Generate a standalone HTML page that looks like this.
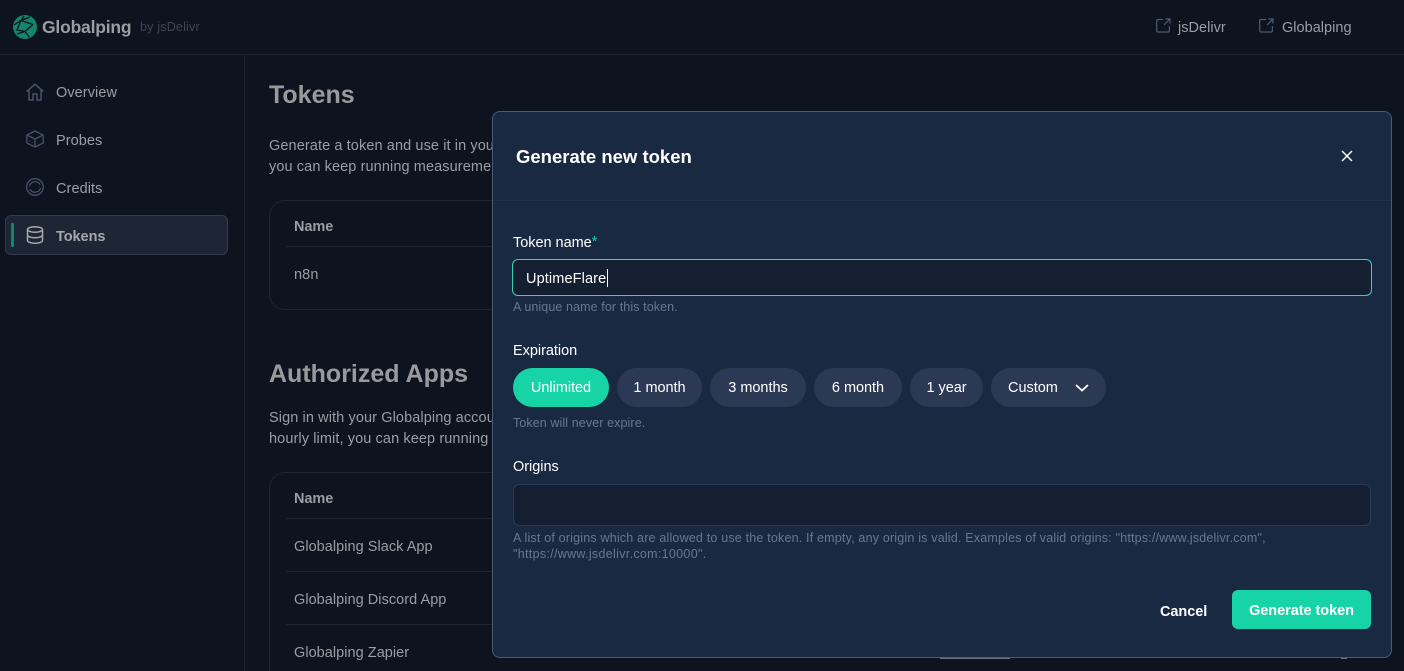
<!DOCTYPE html>
<html><head><meta charset="utf-8"><style>
html,body{margin:0;padding:0;width:1404px;height:671px;overflow:hidden;background:#0d131f;font-family:"Liberation Sans",sans-serif}
#r{position:relative;width:1404px;height:671px;overflow:hidden;background:#0d131f}
.t{position:absolute;white-space:nowrap;line-height:20px;font-size:14.5px}
.b{position:absolute;box-sizing:border-box}
.g{color:#9a9ea4}
.h{font-size:25px;font-weight:700;color:#9a9a9c;line-height:30px;letter-spacing:0}
.w{color:#fff}
.s{font-size:12.5px;color:#6a778c;line-height:16px;letter-spacing:.1px}
.n{font-size:14.5px;font-weight:700;letter-spacing:-.05px}
.p{position:absolute;top:368px;height:39px;border-radius:20px;background:#2b3954;color:#fff;font-size:14.5px;line-height:41px;text-align:center;letter-spacing:-.03px}
svg{position:absolute;overflow:visible}
</style></head><body><div id="r">
<div class="b" style="left:0;top:54px;width:1404px;height:1px;background:#1a2331"></div>
<div class="b" style="left:244px;top:55px;width:1px;height:616px;background:#1a2331"></div>

<svg style="left:13px;top:15px" width="24" height="24" viewBox="0 0 24 24"><circle cx="12" cy="12" r="12" fill="#12866b"/><path d="M1 10 8 5.500l9-3.500M8 5.500 4 15l8 1.500 8-7M8 5.500l12 4M12 16.500l4.500 6M12 16.500 4 19M8 5.500 11 1" fill="none" stroke="#0d131f" stroke-width="1.300"/></svg>
<div class="t" style="left:42px;top:17px;font-size:17.5px;font-weight:700;color:#9a9ea2;letter-spacing:-.2px">Globalping</div>
<div class="t" style="left:140px;top:17px;font-size:12.5px;color:#3d4655;letter-spacing:.2px">by jsDelivr</div>

<svg style="left:1156px;top:18px" width="15" height="15" viewBox="0 0 15 15" fill="none" stroke="#4c5c70" stroke-width="1.200"><path d="M7 1.500H2A1.500 1.500 0 0 0 .7 3v9.500A1.500 1.500 0 0 0 2 14h10a1.500 1.500 0 0 0 1.400-1.500V8M9.500 1H14v4.500M14 1 8 7"/></svg>
<div class="t g" style="left:1178px;top:18px;letter-spacing:.02px">jsDelivr</div>
<svg style="left:1259px;top:18px" width="15" height="15" viewBox="0 0 15 15" fill="none" stroke="#4c5c70" stroke-width="1.200"><path d="M7 1.500H2A1.500 1.500 0 0 0 .7 3v9.500A1.500 1.500 0 0 0 2 14h10a1.500 1.500 0 0 0 1.400-1.500V8M9.500 1H14v4.500M14 1 8 7"/></svg>
<div class="t g" style="left:1282px;top:18px;letter-spacing:.02px">Globalping</div>

<svg style="left:26px;top:83px" width="18" height="18" viewBox="0 0 18 18" fill="none" stroke="#465268" stroke-width="1.500"><path d="M.7 8.500 9 1.200l8.300 7.300M3 6.800V17h4v-6h4v6h4V6.800"/></svg>
<div class="t g" style="left:56px;top:83px;letter-spacing:.07px">Overview</div>
<svg style="left:26px;top:130px" width="18" height="18" viewBox="0 0 18 18" fill="none" stroke="#465268" stroke-width="1.300"><path d="M9 1 .8 5v8L9 17l8.200-4V5zM.8 5 9 9l8.200-4M9 9v8M3.500 10.500v.8M6 11.800v.8"/></svg>
<div class="t g" style="left:56px;top:131px;letter-spacing:.07px">Probes</div>
<svg style="left:26px;top:178px" width="18" height="18" viewBox="0 0 18 18" fill="none" stroke="#465268" stroke-width="1.300"><circle cx="9" cy="9" r="8.300"/><path d="M14 6.500A5.800 5.800 0 0 0 3.500 8M4 11.500A5.800 5.800 0 0 0 14.500 10"/></svg>
<div class="t g" style="left:56px;top:179px;letter-spacing:.07px">Credits</div>
<div class="b" style="left:5px;top:215px;width:223px;height:40px;background:#1e2635;border:1px solid #323b4b;border-radius:6px"></div>
<div class="b" style="left:11px;top:223px;width:3px;height:24px;background:#12866b;border-radius:1px"></div>
<svg style="left:26px;top:226px" width="18" height="18" viewBox="0 0 18 18" fill="none" stroke="#a5a9ae" stroke-width="1.500"><ellipse cx="9" cy="3.500" rx="7.500" ry="2.800"/><path d="M1.500 3.500v11c0 1.500 3.300 2.800 7.500 2.800s7.500-1.300 7.500-2.800v-11M1.500 9c0 1.500 3.300 2.800 7.500 2.800s7.500-1.300 7.500-2.800"/></svg>
<div class="t n" style="left:56px;top:227px;color:#a5a9ae">Tokens</div>

<div class="t h" style="left:269px;top:80px">Tokens</div>
<div class="t g" style="left:269px;top:136px;letter-spacing:.1px">Generate a token and use it in your</div>
<div class="t g" style="left:269px;top:157px;letter-spacing:.1px">you can keep running measurements</div>
<div class="b" style="left:269px;top:200px;width:1111px;height:110px;border:1px solid #1c2533;border-radius:16px"></div>
<div class="t n" style="left:294px;top:217px;color:#9a9ea4">Name</div>
<div class="b" style="left:286px;top:246px;width:1077px;height:1px;background:#1c2533"></div>
<div class="t g" style="left:294px;top:265px;letter-spacing:.1px">n8n</div>

<div class="t h" style="left:269px;top:359px">Authorized Apps</div>
<div class="t g" style="left:269px;top:408px;letter-spacing:.1px">Sign in with your Globalping account</div>
<div class="t g" style="left:269px;top:429px;letter-spacing:.1px">hourly limit, you can keep running</div>
<div class="b" style="left:269px;top:472px;width:1111px;height:230px;border:1px solid #1c2533;border-right:none;border-radius:16px 0 0 16px"></div>
<div class="t n" style="left:294px;top:489px;color:#9a9ea4">Name</div>
<div class="b" style="left:286px;top:518px;width:1077px;height:1px;background:#1c2533"></div>
<div class="t g" style="left:294px;top:537px;letter-spacing:.04px">Globalping Slack App</div>
<div class="b" style="left:286px;top:571px;width:1077px;height:1px;background:#1c2533"></div>
<div class="t g" style="left:294px;top:590px;letter-spacing:.04px">Globalping Discord App</div>
<div class="b" style="left:286px;top:624px;width:1077px;height:1px;background:#1c2533"></div>
<div class="t g" style="left:294px;top:643px;letter-spacing:.04px">Globalping Zapier</div>
<div class="b" style="left:940px;top:658px;width:70px;height:1px;background:#6d7278"></div>
<div class="b" style="left:1341px;top:658px;width:6px;height:1px;background:#6d7278"></div>

<div class="b" style="left:492px;top:111px;width:900px;height:547px;background:#1a2942;border:1px solid #4a5b75;border-radius:8px"></div>
<div class="b" style="left:493px;top:200px;width:898px;height:1px;background:#22324c"></div>
<div class="t w" style="left:516px;top:147px;font-size:18.5px;font-weight:700;letter-spacing:0">Generate new token</div>
<svg style="left:1341px;top:150px" width="12" height="12" viewBox="0 0 12 12" fill="none" stroke="#fff" stroke-width="1.500"><path d="M1 1l10 10M11 1 1 11"/></svg>

<div class="t w" style="left:513px;top:233px;letter-spacing:-.03px">Token name<span style="color:#17d4a7;position:relative;top:-1px">*</span></div>
<div class="b" style="left:512px;top:259px;width:860px;height:37px;background:#151f32;border:1px solid #3fcfb2;border-radius:6px"></div>
<div class="t w" style="left:526px;top:269px;letter-spacing:.12px">UptimeFlare</div>
<div class="b" style="left:607px;top:269px;width:1px;height:18px;background:#fff"></div>
<div class="t s" style="left:513px;top:299px">A unique name for this token.</div>

<div class="t w" style="left:513px;top:341px;letter-spacing:-.03px">Expiration</div>
<div class="p" style="left:513px;width:96px;background:#17d4a7">Unlimited</div>
<div class="p" style="left:617px;width:85px">1 month</div>
<div class="p" style="left:710px;width:96px">3 months</div>
<div class="p" style="left:814px;width:88px">6 month</div>
<div class="p" style="left:910px;width:73px">1 year</div>
<div class="p" style="left:991px;width:115px;text-align:left;text-indent:17px">Custom</div>
<svg style="left:1075px;top:384px" width="14" height="8" viewBox="0 0 14 8" fill="none" stroke="#fff" stroke-width="1.800"><path d="M1 1l6 5.500L13 1"/></svg>
<div class="t s" style="left:513px;top:415px">Token will never expire.</div>

<div class="t w" style="left:513px;top:457px;letter-spacing:-.03px">Origins</div>
<div class="b" style="left:513px;top:484px;width:858px;height:42px;background:#151f32;border:1px solid #2b3954;border-radius:6px"></div>
<div class="t s" style="left:513px;top:530px;letter-spacing:.19px">A list of origins which are allowed to use the token. If empty, any origin is valid. Examples of valid origins: "https://www.jsdelivr.com",</div>
<div class="t s" style="left:513px;top:546px;letter-spacing:.31px">"https://www.jsdelivr.com:10000".</div>

<div class="t w n" style="left:1160px;top:602px">Cancel</div>
<div class="b" style="left:1232px;top:590px;width:139px;height:39px;background:#17d4a7;border-radius:6px"></div>
<div class="t w n" style="left:1232px;top:601px;width:139px;text-align:center">Generate token</div>
</div></body></html>
